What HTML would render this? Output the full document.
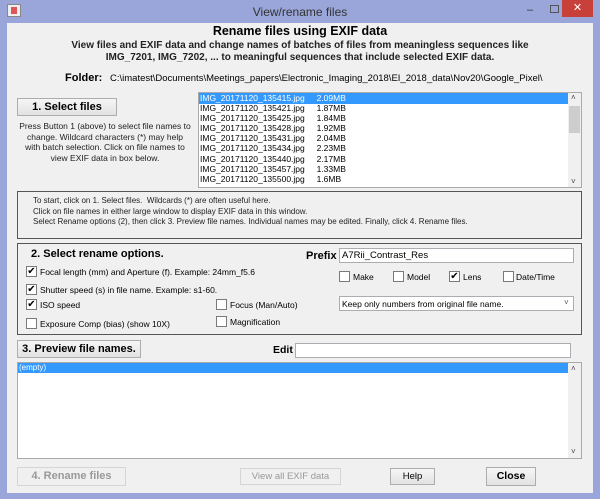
<!DOCTYPE html>
<html><head><style>
*{margin:0;padding:0;box-sizing:border-box}
body{width:600px;height:499px;background:#9aa5d9;font-family:"Liberation Sans",Arial,sans-serif;position:relative;overflow:hidden;color:#000}
.a{position:absolute}
.client{left:7px;top:23px;width:586px;height:470px;background:#f0f0f0}
.t{position:absolute;white-space:nowrap}
.btn{position:absolute;background:linear-gradient(#f6f6f6,#e2e2e2);border:1px solid #adadad;text-align:center;font-size:11px}
.box{position:absolute;border:1px solid #555;}
.cb{position:absolute;width:11px;height:11px;border:1px solid #7a7a7a;background:#fff;font-size:10px;line-height:9px;text-align:center}
.inp{position:absolute;background:#fff;border:1px solid #abadb3}
.s{font-size:8.5px}
</style></head><body>
<div class="a" style="left:0;top:0;width:600px;height:23px;background:#9aa5d9"></div>
<div class="a" style="left:7px;top:4px;width:14px;height:13px;background:#eee;border:1px solid #888"><div style="margin:2px 3px;width:6px;height:7px;background:#d55"></div></div>
<div class="t" style="left:0;width:600px;text-align:center;top:5px;font-size:12px;color:#333">View/rename files</div>
<div class="t" style="left:527px;top:4px;font-size:11px;color:#333">–</div>
<div class="a" style="left:550px;top:5px;width:9px;height:8px;border:1px solid #555"></div>
<div class="a" style="left:562px;top:0;width:31px;height:17px;background:#c7413a;color:#fff;text-align:center;font-size:11px;line-height:16px">✕</div>
<div class="a client"></div>

<div class="t" style="left:0;width:600px;text-align:center;top:24px;font-size:12.5px;font-weight:bold">Rename files using EXIF data</div>
<div class="t" style="left:0;width:600px;text-align:center;top:40px;font-size:10px;font-weight:bold;color:#222;line-height:12px">View files and EXIF data and change names of batches of files from meaningless sequences like<br>IMG_7201, IMG_7202, ... to meaningful sequences that include selected EXIF data.</div>
<div class="t" style="left:65px;top:72px;font-size:11px;font-weight:bold">Folder:</div>
<div class="t" style="left:110px;top:73px;font-size:9.5px">C:\imatest\Documents\Meetings_papers\Electronic_Imaging_2018\EI_2018_data\Nov20\Google_Pixel\</div>

<div class="btn" style="left:17px;top:98px;width:100px;height:18px;font-weight:bold;font-size:11px;line-height:16px">1. Select files</div>
<div class="t s" style="left:17px;width:176px;text-align:center;top:121px;line-height:10.5px;color:#222">Press Button 1 (above) to select file names to<br>change. Wildcard characters (*) may help<br>with batch selection. Click on file names to<br>view EXIF data in box below.</div>

<div class="a" style="left:198px;top:92px;width:384px;height:96px;background:#fff;border:1px solid #aaa"></div>
<div class="a" style="left:199px;top:93px;width:369px;height:11px;background:#3399ff"></div>
<div class="a" style="left:568px;top:93px;width:13px;height:94px;background:#f0f0f0"></div>
<div class="a" style="left:569px;top:106px;width:11px;height:27px;background:#cdcdcd"></div>
<div class="t" style="left:571px;top:93px;font-size:8px;color:#444">˄</div>
<div class="t" style="left:571px;top:177px;font-size:8px;color:#444">˅</div>
<div class="t s" style="left:200px;top:93px;line-height:10.1px">
<span style="color:#fff">IMG_20171120_135415.jpg&nbsp;&nbsp;&nbsp;&nbsp; 2.09MB</span><br>IMG_20171120_135421.jpg&nbsp;&nbsp;&nbsp;&nbsp; 1.87MB<br>IMG_20171120_135425.jpg&nbsp;&nbsp;&nbsp;&nbsp; 1.84MB<br>IMG_20171120_135428.jpg&nbsp;&nbsp;&nbsp;&nbsp; 1.92MB<br>IMG_20171120_135431.jpg&nbsp;&nbsp;&nbsp;&nbsp; 2.04MB<br>IMG_20171120_135434.jpg&nbsp;&nbsp;&nbsp;&nbsp; 2.23MB<br>IMG_20171120_135440.jpg&nbsp;&nbsp;&nbsp;&nbsp; 2.17MB<br>IMG_20171120_135457.jpg&nbsp;&nbsp;&nbsp;&nbsp; 1.33MB<br>IMG_20171120_135500.jpg&nbsp;&nbsp;&nbsp;&nbsp; 1.6MB</div>

<div class="box" style="left:17px;top:191px;width:565px;height:48px"></div>
<div class="t" style="left:33px;top:196px;font-size:8px;line-height:10.5px;color:#222">To start, click on 1. Select files.&nbsp; Wildcards (*) are often useful here.<br>Click on file names in either large window to display EXIF data in this window.<br>Select Rename options (2), then click 3. Preview file names. Individual names may be edited. Finally, click 4. Rename files.</div>

<div class="box" style="left:17px;top:243px;width:565px;height:92px"></div>
<div class="t" style="left:31px;top:248px;font-size:11px;font-weight:bold">2. Select rename options.</div>
<div class="t" style="left:306px;top:250px;font-size:11px;font-weight:bold">Prefix</div>
<div class="inp" style="left:339px;top:248px;width:235px;height:15px"></div>
<div class="t" style="left:342px;top:250px;font-size:9.5px">A7Rii_Contrast_Res</div>

<div class="cb" style="left:26px;top:266px">✔</div><div class="t s" style="left:40px;top:267px">Focal length (mm) and Aperture (f). Example: 24mm_f5.6</div>
<div class="cb" style="left:26px;top:284px">✔</div><div class="t s" style="left:40px;top:285px">Shutter speed (s) in file name. Example: s1-60.</div>
<div class="cb" style="left:26px;top:299px">✔</div><div class="t s" style="left:40px;top:300px">ISO speed</div>
<div class="cb" style="left:26px;top:318px"></div><div class="t s" style="left:40px;top:319px">Exposure Comp (bias) (show 10X)</div>
<div class="cb" style="left:216px;top:299px"></div><div class="t s" style="left:230px;top:300px">Focus (Man/Auto)</div>
<div class="cb" style="left:216px;top:316px"></div><div class="t s" style="left:230px;top:317px">Magnification</div>

<div class="cb" style="left:339px;top:271px"></div><div class="t s" style="left:353px;top:272px">Make</div>
<div class="cb" style="left:393px;top:271px"></div><div class="t s" style="left:407px;top:272px">Model</div>
<div class="cb" style="left:449px;top:271px">✔</div><div class="t s" style="left:463px;top:272px">Lens</div>
<div class="cb" style="left:503px;top:271px"></div><div class="t s" style="left:516px;top:272px">Date/Time</div>

<div class="inp" style="left:339px;top:296px;width:235px;height:15px"></div>
<div class="t s" style="left:342px;top:299px">Keep only numbers from original file name.</div>
<div class="t" style="left:564px;top:298px;font-size:8px;color:#555">˅</div>

<div class="btn" style="left:17px;top:340px;width:124px;height:18px;font-weight:bold;font-size:11px;line-height:16px">3. Preview file names.</div>
<div class="t" style="left:273px;top:344px;font-size:10.5px;font-weight:bold">Edit</div>
<div class="inp" style="left:295px;top:343px;width:276px;height:15px"></div>

<div class="a" style="left:17px;top:362px;width:565px;height:97px;background:#fff;border:1px solid #aaa"></div>
<div class="a" style="left:18px;top:363px;width:550px;height:10px;background:#3399ff"></div>
<div class="t" style="left:19px;top:363px;font-size:8px;color:#fff">(empty)</div>
<div class="a" style="left:568px;top:363px;width:13px;height:95px;background:#f0f0f0"></div>
<div class="t" style="left:571px;top:364px;font-size:8px;color:#444">˄</div>
<div class="t" style="left:571px;top:447px;font-size:8px;color:#444">˅</div>

<div class="btn" style="left:17px;top:467px;width:109px;height:19px;font-weight:bold;font-size:11px;line-height:17px;color:#999;border-color:#d5d5d5;background:#f0f0f0">4. Rename files</div>
<div class="btn" style="left:240px;top:468px;width:101px;height:17px;font-size:9.5px;line-height:15px;color:#999;border-color:#d5d5d5;background:#f0f0f0">View all EXIF data</div>
<div class="btn" style="left:390px;top:468px;width:45px;height:17px;font-size:9.5px;line-height:15px">Help</div>
<div class="btn" style="left:486px;top:467px;width:50px;height:19px;font-size:10.5px;font-weight:bold;line-height:17px">Close</div>
</body></html>
